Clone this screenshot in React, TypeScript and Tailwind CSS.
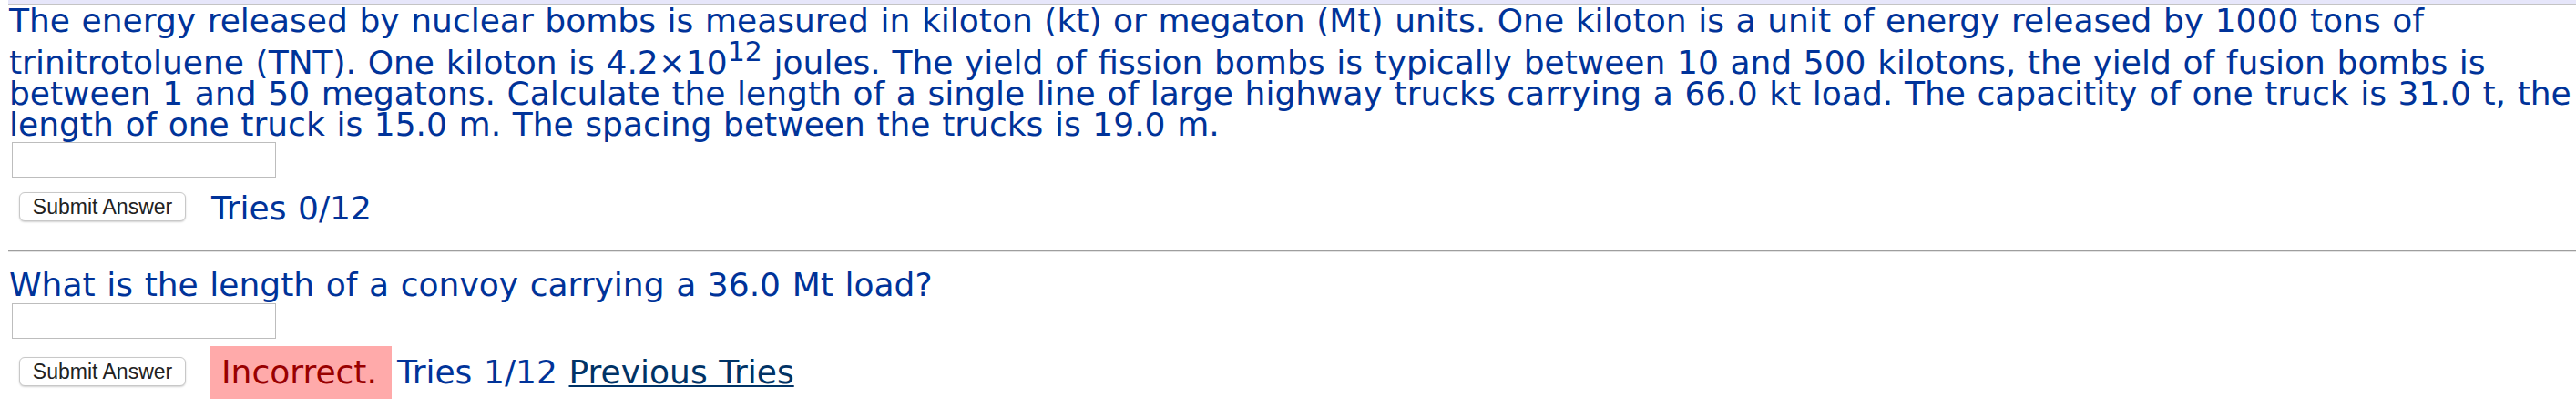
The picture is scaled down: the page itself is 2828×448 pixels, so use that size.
import React from "react";

function SubmitButton() {
  return (
    <button
      type="button"
      className="ml-[12px] flex h-[32px] w-[183px] shrink-0 items-center justify-center rounded-[6px] border border-[#c8c8c8] bg-white pt-px font-['Liberation_Sans',Arial,sans-serif] text-[23px] text-[#222] [word-spacing:0] shadow-[0_1px_2px_rgba(0,0,0,0.18)]"
    >
      Submit Answer
    </button>
  );
}

function AnswerBox() {
  return <div className="ml-[4px] h-[39px] w-[290px] border border-[#bdbdbd] bg-white" />;
}

export default function App() {
  return (
    <div className="min-h-[448px] w-[2828px] bg-white pl-[9px] font-['DejaVu_Sans',Verdana,sans-serif] text-[#003399] [word-spacing:1.2px]">
      <div className="h-[6px] border-b-2 border-[#c4c4c4] bg-[#e6e6fa]" />

      <p className="pl-px text-[36px] leading-[34px]">
        The energy released by nuclear bombs is measured in kiloton (kt) or megaton (Mt) units. One kiloton is a unit of energy released by 1000 tons of
        <br />
        trinitrotoluene (TNT). One kiloton is 4.2×10
        <sup className="static align-[14px] text-[30px] leading-[34px]">12</sup> joules. The yield of fission bombs is typically between 10 and 500 kilotons, the yield of fusion bombs is
        <br />
        between 1 and 50 megatons. Calculate the length of a single line of large highway trucks carrying a 66.0 kt load. The capacitity of one truck is 31.0 t, the
        <br />
        length of one truck is 15.0 m. The spacing between the trucks is 19.0 m.
      </p>

      <div className="mt-[2px]">
        <AnswerBox />
      </div>

      <div className="mt-[16px] flex items-start">
        <SubmitButton />
        <span className="ml-[28px] text-[36px] leading-[36px]">Tries 0/12</span>
      </div>

      <div className="mt-[27px] h-[3px] border-t-2 border-b border-t-[#9e9e9e] border-b-[#e4e4e4]" />

      <p className="mt-[19px] pl-px text-[36px] leading-[34px]">What is the length of a convoy carrying a 36.0 Mt load?</p>

      <div className="mt-[3px]">
        <AnswerBox />
      </div>

      <div className="mt-[8px] flex items-start">
        <div className="mt-[12px]">
          <SubmitButton />
        </div>
        <span className="ml-[27px] bg-[#ffaaaa] py-[8px] pl-[12px] pr-[16px] text-[36px] leading-[42px] text-[#990000]">
          Incorrect.
        </span>
        <span className="ml-[6px] pt-[8px] text-[36px] leading-[42px]">
          Tries 1/12{" "}
          <a href="#" className="text-[#003366] underline decoration-2 underline-offset-[2px]">
            Previous Tries
          </a>
        </span>
      </div>
    </div>
  );
}
